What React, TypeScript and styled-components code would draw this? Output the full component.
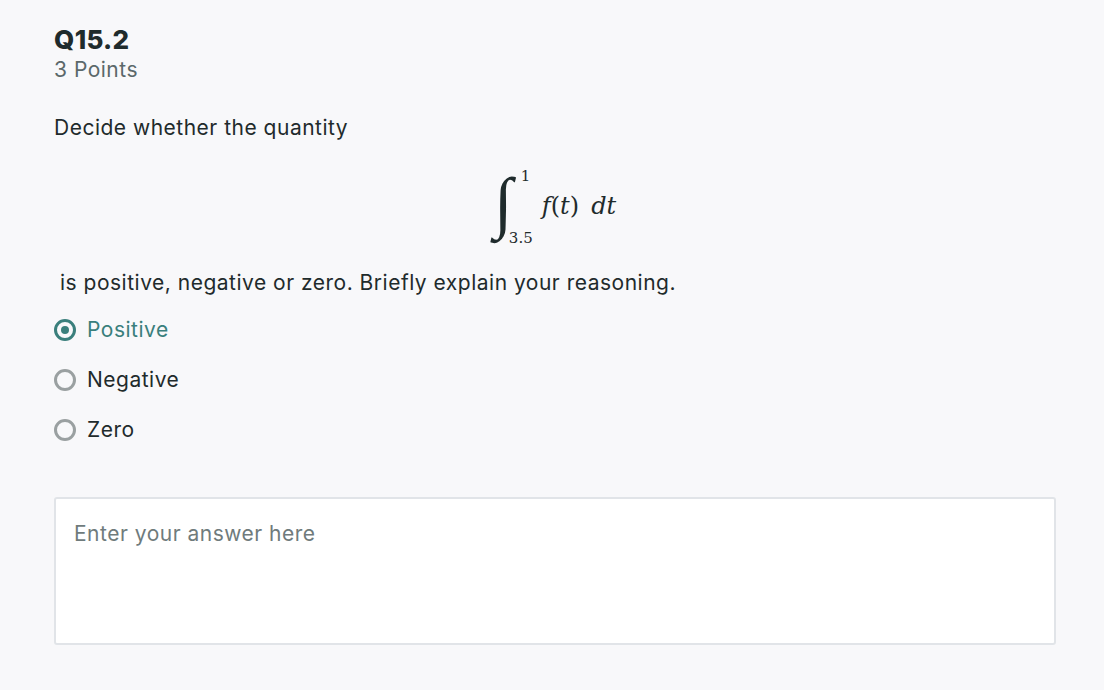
import React from "react";
import styled, { createGlobalStyle } from "styled-components";

const Global = createGlobalStyle`
  html, body { margin: 0; padding: 0; background: #f8f8fa; }
  body { font-family: Inter, "Open Sans", sans-serif; color: #1f2b2c; letter-spacing: 0.5px; }
`;

const Page = styled.div`
  padding: 24px 48px 40px 54px;
  display: flex;
  flex-direction: column;
`;

const Title = styled.h2`
  margin: 0;
  font-size: 26px;
  font-weight: 800;
  line-height: 32px;
  letter-spacing: 0.3px;
  color: #1f2b2c;
`;

const Points = styled.div`
  font-size: 21px;
  line-height: 28px;
  color: #5b686a;
`;

const Para = styled.p<{ $indent?: number; $top?: number }>`
  margin: ${(p) => p.$top ?? 0}px 0 0;
  font-size: 21px;
  line-height: 28px;
  padding-left: ${(p) => p.$indent ?? 0}px;
`;

const MathBlock = styled.div`
  display: flex;
  justify-content: center;
  align-items: center;
  margin: 22px 0 29px;
  font-family: "DejaVu Serif", "Liberation Serif", serif;
  letter-spacing: 0;
  color: #1f2b2c;
`;

const Integral = styled.div`
  position: relative;
  width: 48px;
  height: 76px;
`;

const IntSign = styled.span`
  position: absolute;
  left: 0px;
  top: 0px;
  font-size: 68px;
  line-height: 76px;
  height: 76px;
  font-family: "Liberation Serif", serif;
  font-weight: 400;
`;

const Upper = styled.span`
  position: absolute;
  left: 27px;
  top: 3px;
  font-size: 15px;
  line-height: 18px;
`;

const Lower = styled.span`
  position: absolute;
  left: 15px;
  bottom: -7px;
  font-size: 15px;
  line-height: 18px;
`;

const Integrand = styled.span`
  display: flex;
  align-items: baseline;
  font-size: 24px;
  font-family: "DejaVu Serif", serif;
  white-space: pre;
  margin-top: 8px;
  & i { font-style: italic; }
`;

const MathGap = styled.span`
  display: inline-block;
  width: 12px;
`;

const Options = styled.div`
  display: flex;
  flex-direction: column;
  gap: 22px;
  margin-top: 19px;
`;

const Option = styled.label<{ $checked?: boolean }>`
  display: flex;
  align-items: center;
  gap: 11px;
  font-size: 21px;
  line-height: 28px;
  color: ${(p) => (p.$checked ? "#3a7f7c" : "#1f2b2c")};
`;

const Radio = styled.span<{ $checked?: boolean }>`
  box-sizing: border-box;
  width: 22px;
  height: 22px;
  border-radius: 50%;
  border: 3px solid ${(p) => (p.$checked ? "#3a7f7c" : "#9aa0a1")};
  display: flex;
  align-items: center;
  justify-content: center;
  &::after {
    content: "";
    width: 8px;
    height: 8px;
    border-radius: 50%;
    background: #3a7f7c;
    display: ${(p) => (p.$checked ? "block" : "none")};
  }
`;

const Answer = styled.textarea`
  margin-top: 53px;
  box-sizing: border-box;
  width: 1002px;
  height: 148px;
  background: #fff;
  border: 2px solid #e1e4e8;
  border-radius: 3px;
  padding: 21px 18px;
  font-family: Inter, "Open Sans", sans-serif;
  font-size: 21px;
  line-height: 28px;
  letter-spacing: 0.5px;
  color: #1f2b2c;
  resize: none;
  outline: none;
  &::placeholder { color: #6f7b7c; }
`;

const options = [
  { label: "Positive", checked: true },
  { label: "Negative", checked: false },
  { label: "Zero", checked: false },
];

export default function App() {
  return (
    <>
      <Global />
      <Page>
        <Title>Q15.2</Title>
        <Points>3 Points</Points>
        <Para $top={30}>Decide whether the quantity</Para>
        <MathBlock>
          <Integral>
            <IntSign>∫</IntSign>
            <Upper>1</Upper>
            <Lower>3.5</Lower>
          </Integral>
          <Integrand>
            <i>f</i>(<i>t</i>)<MathGap /><i>dt</i>
          </Integrand>
        </MathBlock>
        <Para $indent={6}>is positive, negative or zero. Briefly explain your reasoning.</Para>
        <Options>
          {options.map((o) => (
            <Option key={o.label} $checked={o.checked}>
              <Radio $checked={o.checked} />
              {o.label}
            </Option>
          ))}
        </Options>
        <Answer placeholder="Enter your answer here" />
      </Page>
    </>
  );
}
